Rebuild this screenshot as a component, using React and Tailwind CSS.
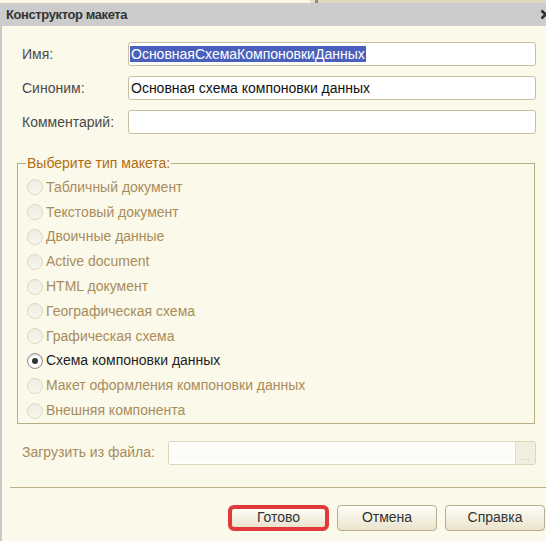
import React from 'react';

const font = "font-['Liberation_Sans',Arial,sans-serif]";

const types = [
  { label: 'Табличный документ' },
  { label: 'Текстовый документ' },
  { label: 'Двоичные данные' },
  { label: 'Active document' },
  { label: 'HTML документ' },
  { label: 'Географическая схема' },
  { label: 'Графическая схема' },
  { label: 'Схема компоновки данных', checked: true },
  { label: 'Макет оформления компоновки данных' },
  { label: 'Внешняя компонента' },
];

const Field = ({ label, children }) => (
  <div className="flex items-center h-[24px] pl-[20px] pr-[10px]">
    <span className="w-[106px] text-[#4a4a4a]">{label}</span>
    <div className="flex-1 h-[24px] bg-white border border-[#c9bf9f] rounded-[3px] flex items-center px-[1px] overflow-hidden whitespace-nowrap">
      {children}
    </div>
  </div>
);

const Radio = ({ label, checked }) => (
  <div className="flex items-center h-[24.8px] ml-[1px]">
    {checked ? (
      <span className="w-[16px] h-[16px] shrink-0 rounded-full border border-[#8f8f8f] bg-white flex items-center justify-center shadow-[inset_0_1px_2px_rgba(0,0,0,0.2)]">
        <span className="w-[6px] h-[6px] rounded-full bg-[#333]" />
      </span>
    ) : (
      <span className="w-[16px] h-[16px] shrink-0 rounded-full border border-[#dcd8c6] bg-gradient-to-b from-[#efece0] to-[#f8f6ee]" />
    )}
    <span className={`ml-[3px] whitespace-nowrap ${checked ? 'text-[#1e1e1e]' : 'text-[#a98c5c]'}`}>{label}</span>
  </div>
);

const Button = ({ children, highlight }) => (
  <button
    className={`h-[26px] rounded-[4px] bg-gradient-to-b from-[#fefdf7] to-[#e9e4cd] text-[#333] flex items-center justify-center ${
      highlight ? 'border-[4px] border-[#e2383a] rounded-[6px] w-[101px]' : 'border border-[#b9ae8c] w-[100px]'
    }`}
  >
    {children}
  </button>
);

export default function App() {
  return (
    <div className={`w-[546px] h-[541px] overflow-hidden bg-[#fbf9ea] flex flex-col text-[14px] ${font}`}>
      {/* strip of the window behind */}
      <div className="h-[3px] flex">
        <div className="w-[310px] bg-[#fbf8e8]" />
        <div className="w-[5px] bg-[#e6e0c6]" />
        <div className="w-[3px] bg-[#8a8a8a]" />
        <div className="flex-1 bg-[#dcd6bc]" />
      </div>

      {/* title bar */}
      <div className="h-[23px] bg-[#cccccc] flex items-center justify-between pl-[6px]">
        <span className="font-bold text-[#333] text-[13px] tracking-[-0.4px]">Конструктор макета</span>
        <svg width="11" height="11" viewBox="0 0 11 11" className="mr-[-5px]">
          <path d="M1.5 1.5 L9.5 9.5 M9.5 1.5 L1.5 9.5" stroke="#2e2e2e" strokeWidth="2.6" />
        </svg>
      </div>

      <div className="flex-1 flex flex-col border-l-2 border-[#c9c9c9]">
        <div className="mt-[16px] flex flex-col gap-[10px]">
          <Field label="Имя:">
            <span className="bg-[#4a60bd] text-white leading-[16px] px-[1px]">ОсновнаяСхемаКомпоновкиДанных</span>
          </Field>
          <Field label="Синоним:">
            <span className="text-[#111] px-[1px]">Основная схема компоновки данных</span>
          </Field>
          <Field label="Комментарий:" />
        </div>

        <fieldset className="mt-[21px] ml-[15px] mr-[11px] border border-[#b9ad86] pl-[8px] pt-[4px] pb-0">
          <legend className="px-[1px] text-[#b06c12] leading-[16px]">Выберите тип макета:</legend>
          {types.map((t) => (
            <Radio key={t.label} label={t.label} checked={t.checked} />
          ))}
        </fieldset>

        <div className="mt-[17px] flex items-center h-[24px] pl-[20px] pr-[10px]">
          <span className="w-[146px] text-[#a98c5c] whitespace-nowrap">Загрузить из файла:</span>
          <div className="flex-1 h-[24px] border border-[#dcd4b8] rounded-[3px] flex overflow-hidden">
            <div className="flex-1 bg-[#fdfcf6] border-[2px] border-white" />
            <div className="w-[20px] bg-[#f1eee0] border-l border-[#e2dcc4] flex items-end justify-center pb-[4px]">
              <span className="text-[9px] leading-[6px] text-[#b8b2a0] tracking-[0.5px]">...</span>
            </div>
          </div>
        </div>

        <div className="mt-[22px] ml-[8px] h-px bg-[#bcb08a]" />

        <div className="mt-[17px] flex justify-end gap-[8px] pr-[1px]">
          <Button highlight>Готово</Button>
          <Button>Отмена</Button>
          <Button>Справка</Button>
        </div>
      </div>
    </div>
  );
}
